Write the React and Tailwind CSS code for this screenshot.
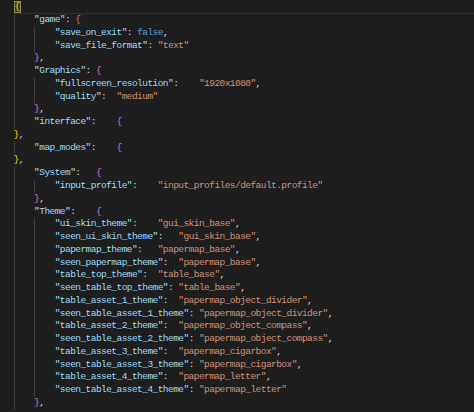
const COLOR = {
  key: "text-[#9cdcfe]",
  str: "text-[#ce9178]",
  kw: "text-[#569cd6]",
  p: "text-[#d4d4d4]",
  gold: "text-[#ffd700]",
  orchid: "text-[#da70d6]",
};

// key/value line; sep "tab" pads to the next 4-column stop like the editor does
function kv(level, key, value, type, sep, comma, guides) {
  const col = level * 4 + key.length + 2 + 1;
  const pad = sep === "tab" ? 4 - (col % 4) : 1;
  const tokens = [
    [`"${key}"`, "key"],
    [":" + " ".repeat(pad), "p"],
    [type === "str" ? `"${value}"` : value, type],
  ];
  if (comma) tokens.push([",", "p"]);
  return { level, guides: guides ?? level, tokens };
}

function open(level, key, sep) {
  const col = level * 4 + key.length + 2 + 1;
  const pad = sep === "tab" ? 4 - (col % 4) : 1;
  return {
    level,
    guides: level,
    tokens: [
      [`"${key}"`, "key"],
      [":" + " ".repeat(pad), "p"],
      ["{", "orchid"],
    ],
  };
}

function close(level, color) {
  return { level, guides: level, tokens: [["}", color], [",", "p"]] };
}

const theme = [
  ["ui_skin_theme", "gui_skin_base"],
  ["seen_ui_skin_theme", "gui_skin_base"],
  ["papermap_theme", "papermap_base"],
  ["seen_papermap_theme", "papermap_base"],
  ["table_top_theme", "table_base"],
  ["seen_table_top_theme", "table_base"],
  ["table_asset_1_theme", "papermap_object_divider"],
  ["seen_table_asset_1_theme", "papermap_object_divider"],
  ["table_asset_2_theme", "papermap_object_compass"],
  ["seen_table_asset_2_theme", "papermap_object_compass"],
  ["table_asset_3_theme", "papermap_cigarbox"],
  ["seen_table_asset_3_theme", "papermap_cigarbox"],
  ["table_asset_4_theme", "papermap_letter"],
  ["seen_table_asset_4_theme", "papermap_letter"],
];

const lines = [
  { level: 0, guides: 0, tokens: [["{", "gold"]], first: true },
  open(1, "game", "space"),
  kv(2, "save_on_exit", "false", "kw", "space", true),
  kv(2, "save_file_format", "text", "str", "space", false),
  close(1, "orchid"),
  open(1, "Graphics", "space"),
  kv(2, "fullscreen_resolution", "1920x1080", "str", "tab", true),
  kv(2, "quality", "medium", "str", "tab", false),
  close(1, "orchid"),
  open(1, "interface", "tab"),
  close(0, "gold"),
  open(1, "map_modes", "tab"),
  close(0, "gold"),
  open(1, "System", "tab"),
  kv(2, "input_profile", "input_profiles/default.profile", "str", "tab", false),
  close(1, "orchid"),
  open(1, "Theme", "tab"),
  ...theme.map(([k, v], i) =>
    kv(2, k, v, "str", "tab", i < theme.length - 1)
  ),
  close(1, "orchid"),
];

function Line({ line }) {
  return (
    <div
      className={
        "flex h-[12.77px] items-center whitespace-pre" +
        (line.first ? " border-b border-[#303030]" : "")
      }
    >
      {Array.from({ length: line.level }).map((_, i) => (
        <span
          key={i}
          className={
            "inline-block h-[12.77px] w-[20.6px] shrink-0" +
            (i < line.guides ? " border-l border-[#404040]" : "")
          }
        />
      ))}
      {line.tokens.map(([text, type], i) =>
        line.first ? (
          <span
            key={i}
            className={`${COLOR[type]} border border-[#8a8a6a] bg-[#ffd70022] leading-[10px]`}
          >
            {text}
          </span>
        ) : (
          <span key={i} className={COLOR[type]}>
            {text}
          </span>
        )
      )}
    </div>
  );
}

export default function App() {
  return (
    <div
      className="h-[412px] w-[474px] overflow-hidden bg-[#1e1e1e] pl-[13.5px] pt-[1px] text-[9.5px] tracking-[-0.55px]"
      style={{ fontFamily: '"Liberation Mono", "DejaVu Sans Mono", monospace' }}
    >
      {lines.map((line, i) => (
        <Line key={i} line={line} />
      ))}
    </div>
  );
}
